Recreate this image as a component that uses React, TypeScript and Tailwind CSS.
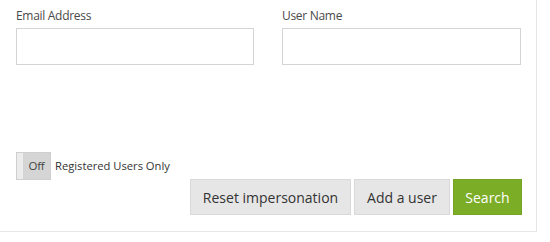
import React from "react";

export default function App() {
  return (
    <div className="w-[550px] h-[242px] bg-white" style={{ fontFamily: '"Open Sans", sans-serif' }}>
      <div className="w-[537px] h-[232px] border-r border-b border-[#e6e6e6] pl-[16px] pr-[14px] pt-[6px] flex flex-col">
        <div className="flex gap-[28px]">
          <div className="w-[238px] flex flex-col">
            <label className="text-[12px] tracking-[-0.3px] leading-[20px] text-[#4a4a4a] h-[22px]">Email Address</label>
            <input className="h-[37px] border border-[#d4d4d4] outline-none" />
          </div>
          <div className="w-[239px] flex flex-col">
            <label className="text-[12px] tracking-[-0.3px] leading-[20px] text-[#4a4a4a] h-[22px]">User Name</label>
            <input className="h-[37px] border border-[#d4d4d4] outline-none" />
          </div>
        </div>
        <div className="mt-[87px] flex items-center h-[28px]">
          <div className="w-[35px] h-[28px] border border-[#cfcfcf] flex">
            <div className="w-[6px] bg-[#ececec]" />
            <div className="flex-1 bg-[#d5d5d5] flex items-center justify-center text-[11.5px] tracking-[-0.3px] text-[#444]">Off</div>
          </div>
          <span className="ml-[4px] text-[11.2px] text-[#333]">Registered Users Only</span>
        </div>
        <div className="flex justify-end gap-[3px] -mt-[1px]">
          <button className="h-[36px] w-[161px] bg-[#e6e6e6] border border-[#d9d9d9] text-[14px] text-[#333]">Reset impersonation</button>
          <button className="h-[36px] w-[96px] bg-[#e6e6e6] border border-[#d9d9d9] text-[14px] text-[#333]">Add a user</button>
          <button className="h-[36px] w-[69px] bg-[#7cad26] border border-[#76a424] text-[14px] text-white">Search</button>
        </div>
      </div>
    </div>
  );
}
